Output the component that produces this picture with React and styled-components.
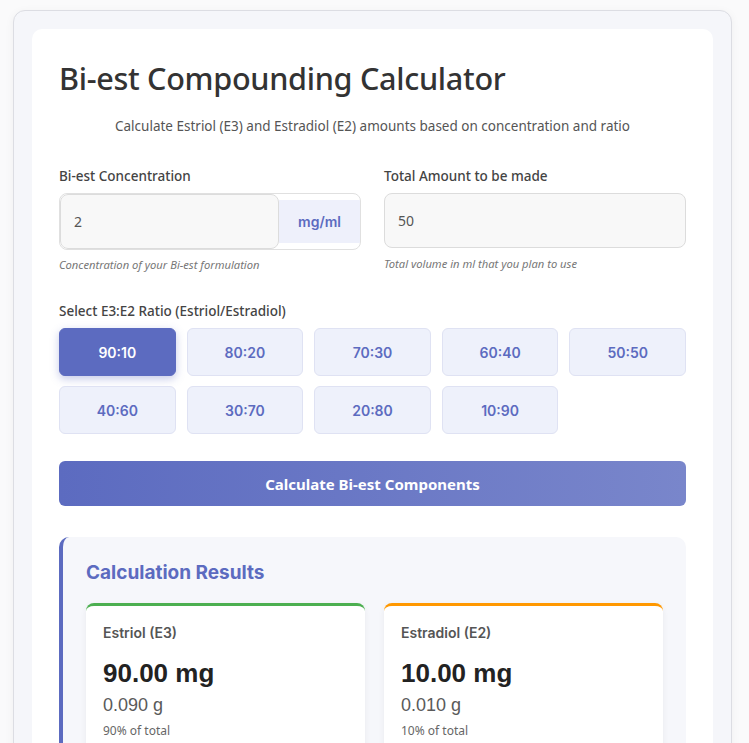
import React, { useState } from 'react';
import styled, { createGlobalStyle } from 'styled-components';

const GlobalStyle = createGlobalStyle`
  body {
    margin: 0;
    background: #fafafb;
    font-family: "Noto Sans", "Open Sans", sans-serif;
    color: #333;
  }
  * { box-sizing: border-box; }
`;

const Page = styled.div`
  padding: 10px 17px 0 13px;
`;

const Shell = styled.div`
  background: #f5f6fa;
  border: 1px solid #dcdde3;
  border-radius: 12px;
  padding: 18px 18px 0 18px;
  box-shadow: 0 2px 10px rgba(0, 0, 0, 0.05);
`;

const Card = styled.div`
  background: #fff;
  border-radius: 10px;
  padding: 28px 27px 40px;
`;

const Title = styled.h1`
  margin: 0;
  font-size: 30.6px;
  font-weight: 500;
  color: #333;
  line-height: 42px;
  letter-spacing: -0.3px;
`;

const Subtitle = styled.p`
  margin: 18px 0 0;
  text-align: center;
  font-size: 13.5px;
  color: #555;
`;

const FieldRow = styled.div`
  display: grid;
  grid-template-columns: 1fr 1fr;
  gap: 23px;
  margin-top: 32px;
`;

const Field = styled.div`
  display: flex;
  flex-direction: column;
`;

const Label = styled.label`
  font-size: 13.5px;
  font-weight: 500;
  color: #444;
  margin-bottom: 8px;
`;

const InputGroup = styled.div`
  display: flex;
  border: 1px solid #e0e0e0;
  border-radius: 8px;
  overflow: hidden;
  height: 57px;
`;

const TextInput = styled.input`
  font-family: "Noto Sans", sans-serif;
  font-size: 14px;
  color: #555;
  background: #f8f8f8;
  border: 1px solid #dcdcdc;
  border-radius: 8px;
  padding: 0 13px;
  height: ${p => (p.$grouped ? '100%' : '55px')};
  width: ${p => (p.$grouped ? '219px' : '100%')};
  outline: none;
`;

const Unit = styled.div`
  flex: 1;
  display: flex;
  align-items: center;
  justify-content: center;
  background: #eef0fb;
  color: #5c6bc0;
  font-family: Inter, sans-serif;
  font-weight: 600;
  font-size: 14px;
  margin: 6px 0;
`;

const Hint = styled.small`
  font-size: 11.2px;
  font-style: italic;
  color: #777;
  margin-top: ${p => p.$top || 8}px;
`;

const Section = styled.div`
  margin-top: 30px;
`;

const RatioGrid = styled.div`
  display: grid;
  grid-template-columns: repeat(5, 1fr);
  gap: 10px 11px;
`;

const RatioButton = styled.button`
  height: 48px;
  border-radius: 6px;
  font-family: Inter, sans-serif;
  font-size: 14px;
  font-weight: 600;
  cursor: pointer;
  border: 1px solid ${p => (p.$active ? '#5c6bc0' : '#dfe2f3')};
  background: ${p => (p.$active ? '#5c6bc0' : '#eef1fb')};
  color: ${p => (p.$active ? '#fff' : '#5c6bc0')};
  box-shadow: ${p => (p.$active ? '0 3px 8px rgba(92, 107, 192, 0.35)' : 'none')};
`;

const CalcButton = styled.button`
  width: 100%;
  height: 45px;
  margin-top: 27px;
  border: none;
  border-radius: 6px;
  background: linear-gradient(90deg, #5c6bc0, #7986cb);
  color: #fff;
  font-family: "Noto Sans", sans-serif;
  font-size: 15px;
  font-weight: 700;
`;

const Results = styled.div`
  margin-top: 31px;
  background: #f6f7fb;
  border-left: 4px solid #5c6bc0;
  border-radius: 10px;
  padding: 24px 23px 30px;
`;

const ResultsTitle = styled.h2`
  margin: 0;
  font-family: Inter, sans-serif;
  font-size: 19px;
  font-weight: 700;
  color: #5c6bc0;
  line-height: 24px;
`;

const ResultGrid = styled.div`
  display: grid;
  grid-template-columns: 1fr 1fr;
  gap: 19px;
  margin-top: 18px;
`;

const ResultCard = styled.div`
  background: #fff;
  border-top: 3px solid ${p => p.$accent};
  border-radius: 8px;
  padding: 18px 17px 20px;
  box-shadow: 0 2px 6px rgba(0, 0, 0, 0.06);
`;

const CardLabel = styled.div`
  font-family: Inter, sans-serif;
  font-size: 14px;
  font-weight: 600;
  color: #555;
`;

const Amount = styled.div`
  margin-top: 17px;
  font-family: "Liberation Sans", Arial, sans-serif;
  font-size: 26px;
  font-weight: 700;
  color: #222;
`;

const Grams = styled.div`
  margin-top: 6px;
  font-family: "Liberation Sans", Arial, sans-serif;
  font-size: 18px;
  color: #5a5a5a;
`;

const Percent = styled.div`
  margin-top: 6px;
  font-size: 12px;
  color: #666;
`;

const ratios = ['90:10', '80:20', '70:30', '60:40', '50:50', '40:60', '30:70', '20:80', '10:90'];

export default function App() {
  const [ratio, setRatio] = useState('90:10');
  return (
    <Page>
      <GlobalStyle />
      <Shell>
        <Card>
          <Title>Bi-est Compounding Calculator</Title>
          <Subtitle>Calculate Estriol (E3) and Estradiol (E2) amounts based on concentration and ratio</Subtitle>

          <FieldRow>
            <Field>
              <Label>Bi-est Concentration</Label>
              <InputGroup>
                <TextInput $grouped defaultValue="2" />
                <Unit>mg/ml</Unit>
              </InputGroup>
              <Hint $top={7}>Concentration of your Bi-est formulation</Hint>
            </Field>
            <Field>
              <Label>Total Amount to be made</Label>
              <TextInput defaultValue="50" />
              <Hint>Total volume in ml that you plan to use</Hint>
            </Field>
          </FieldRow>

          <Section>
            <Label as="div">Select E3:E2 Ratio (Estriol/Estradiol)</Label>
            <RatioGrid>
              {ratios.map(r => (
                <RatioButton key={r} $active={r === ratio} onClick={() => setRatio(r)}>
                  {r}
                </RatioButton>
              ))}
            </RatioGrid>
          </Section>

          <CalcButton>Calculate Bi-est Components</CalcButton>

          <Results>
            <ResultsTitle>Calculation Results</ResultsTitle>
            <ResultGrid>
              <ResultCard $accent="#4caf50">
                <CardLabel>Estriol (E3)</CardLabel>
                <Amount>90.00 mg</Amount>
                <Grams>0.090 g</Grams>
                <Percent>90% of total</Percent>
              </ResultCard>
              <ResultCard $accent="#ff9800">
                <CardLabel>Estradiol (E2)</CardLabel>
                <Amount>10.00 mg</Amount>
                <Grams>0.010 g</Grams>
                <Percent>10% of total</Percent>
              </ResultCard>
            </ResultGrid>
          </Results>
        </Card>
      </Shell>
    </Page>
  );
}
